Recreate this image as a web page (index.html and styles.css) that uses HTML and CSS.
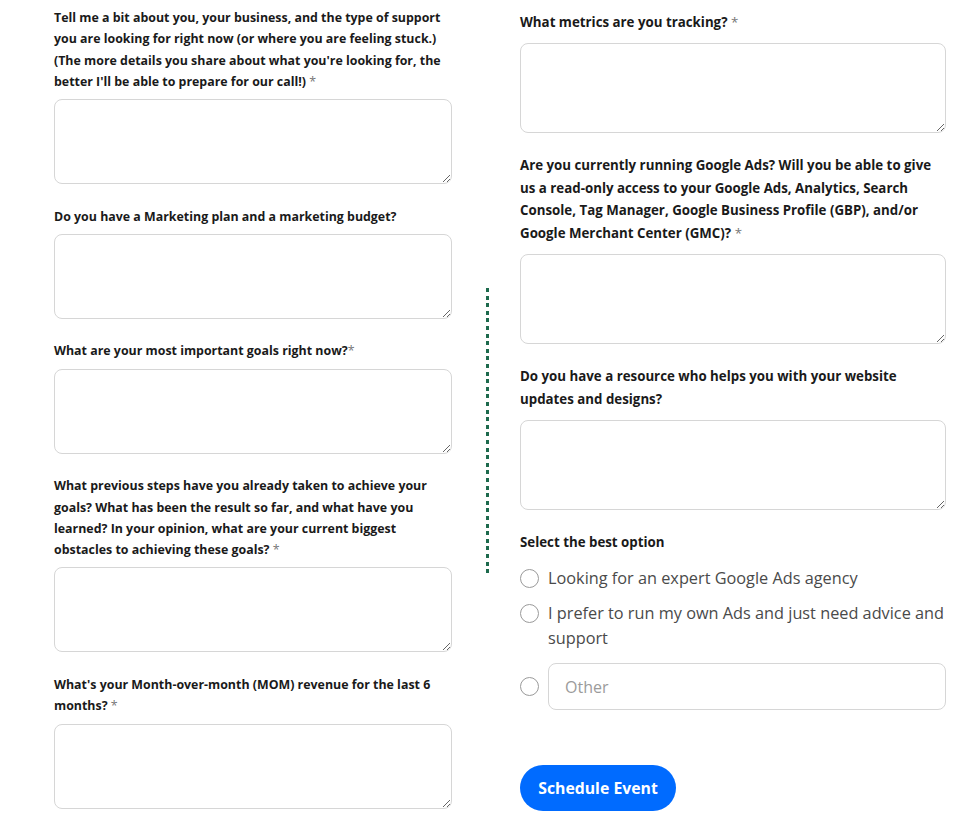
FILE: index.html
```html
<!DOCTYPE html>
<html lang="en">
<head>
  <meta charset="UTF-8">
  <meta name="viewport" content="width=device-width, initial-scale=1.0">
  <title>Schedule Event - Questions</title>
  <link rel="stylesheet" href="styles.css">
</head>
<body>

  <main class="page">

    <!-- Cột trái -->
    <section class="col col-left">
      <div class="field">
        <label for="q1" class="req">Tell me a bit about you, your business, and the type of support you are looking for right now (or where you are feeling stuck.) (The more details you share about what you're looking for, the better I'll be able to prepare for our call!)</label>
        <textarea id="q1"></textarea>
      </div>

      <div class="field">
        <label for="q2">Do you have a Marketing plan and a marketing budget?</label>
        <textarea id="q2"></textarea>
      </div>

      <div class="field">
        <label for="q3" class="req req-tight">What are your most important goals right now?</label>
        <textarea id="q3"></textarea>
      </div>

      <div class="field">
        <label for="q4" class="req">What previous steps have you already taken to achieve your goals? What has been the result so far, and what have you learned? In your opinion, what are your current biggest obstacles to achieving these goals?</label>
        <textarea id="q4"></textarea>
      </div>

      <div class="field">
        <label for="q5" class="req">What's your Month-over-month (MOM) revenue for the last 6 months?</label>
        <textarea id="q5"></textarea>
      </div>
    </section>

    <div class="divider"></div>

    <!-- Cột phải -->
    <section class="col col-right">
      <div class="field">
        <label for="q6" class="req">What metrics are you tracking?</label>
        <textarea id="q6"></textarea>
      </div>

      <div class="field">
        <label for="q7" class="req">Are you currently running Google Ads? Will you be able to give us a read-only access to your Google Ads, Analytics, Search Console, Tag Manager, Google Business Profile (GBP), and/or Google Merchant Center (GMC)?</label>
        <textarea id="q7"></textarea>
      </div>

      <div class="field">
        <label for="q8">Do you have a resource who helps you with your website updates and designs?</label>
        <textarea id="q8"></textarea>
      </div>

      <fieldset class="options">
        <legend>Select the best option</legend>
        <label class="option">
          <input type="radio" name="best">
          <span>Looking for an expert Google Ads agency</span>
        </label>
        <label class="option">
          <input type="radio" name="best">
          <span>I prefer to run my own Ads and just need advice and support</span>
        </label>
        <div class="option option-other">
          <input type="radio" name="best">
          <input type="text" class="other-input" placeholder="Other">
        </div>
      </fieldset>

      <button class="btn">Schedule Event</button>
    </section>

  </main>

</body>
</html>
```

FILE: styles.css
```css
body {
  margin: 0;
  padding: 0;
  background: #fff;
  color: #1a1a1a;
  font-family: "Open Sans", Arial, sans-serif;
}

.page {
  display: flex;
  align-items: flex-start;
  padding-left: 54px;
}

.col {
  display: flex;
  flex-direction: column;
}

.col-left {
  width: 398px;
  padding-top: 7px;
}

.col-right {
  width: 426px;
  padding-top: 10.5px;
}

.divider {
  width: 3px;
  height: 288px;
  margin: 288px 31px 0 34px;
  background: repeating-linear-gradient(to bottom, #1d6a4d 0 4px, transparent 4px 7.6px);
}

label {
  display: block;
  font-weight: bold;
}

.col-left label {
  font-size: 12.4px;
  line-height: 21.3px;
}

.col-right label {
  font-size: 13.3px;
  line-height: 22.5px;
}

.req::after {
  content: " *";
  color: #777;
  font-weight: normal;
}

.req-tight::after {
  content: "*";
}

textarea {
  display: block;
  width: 100%;
  box-sizing: border-box;
  border: 1px solid #d6d6d6;
  border-radius: 8px;
  padding: 10px 14px;
  font-family: inherit;
  font-size: 15px;
  background: #fff;
}

.col-left .field {
  margin-bottom: 21.5px;
}

.col-left textarea {
  height: 85px;
  margin-top: 7px;
}

.col-right .field {
  margin-bottom: 21px;
}

.col-right textarea {
  height: 90px;
  margin-top: 10px;
}

.options {
  border: none;
  margin: 0;
  padding: 0;
}

.options legend {
  padding: 0;
  font-size: 13.3px;
  font-weight: bold;
  line-height: 22px;
  margin-bottom: 12.5px;
}

.col-right .option {
  display: flex;
  align-items: flex-start;
  gap: 9px;
  font-weight: normal;
  font-size: 16.3px;
  line-height: 25px;
  color: #4a4a4a;
  margin-bottom: 10px;
}

.option input[type="radio"] {
  appearance: none;
  flex: none;
  width: 19px;
  height: 19px;
  margin: 3px 0 0;
  border: 1.5px solid #9a9a9a;
  border-radius: 50%;
  background: #fff;
}

.col-right .option-other {
  align-items: center;
  margin-top: 12.5px;
}

.option-other input[type="radio"] {
  margin-top: 0;
}

.other-input {
  flex: 1;
  height: 47px;
  box-sizing: border-box;
  border: 1px solid #d6d6d6;
  border-radius: 8px;
  padding: 0 16px;
  font-family: inherit;
  font-size: 16px;
  color: #4a4a4a;
}

.other-input::placeholder {
  color: #9b9b9b;
}

.btn {
  align-self: flex-start;
  margin-top: 45px;
  width: 156px;
  height: 46px;
  border: none;
  border-radius: 23px;
  background: #006bff;
  color: #fff;
  font-family: inherit;
  font-size: 15.8px;
  font-weight: bold;
  cursor: pointer;
}
```
